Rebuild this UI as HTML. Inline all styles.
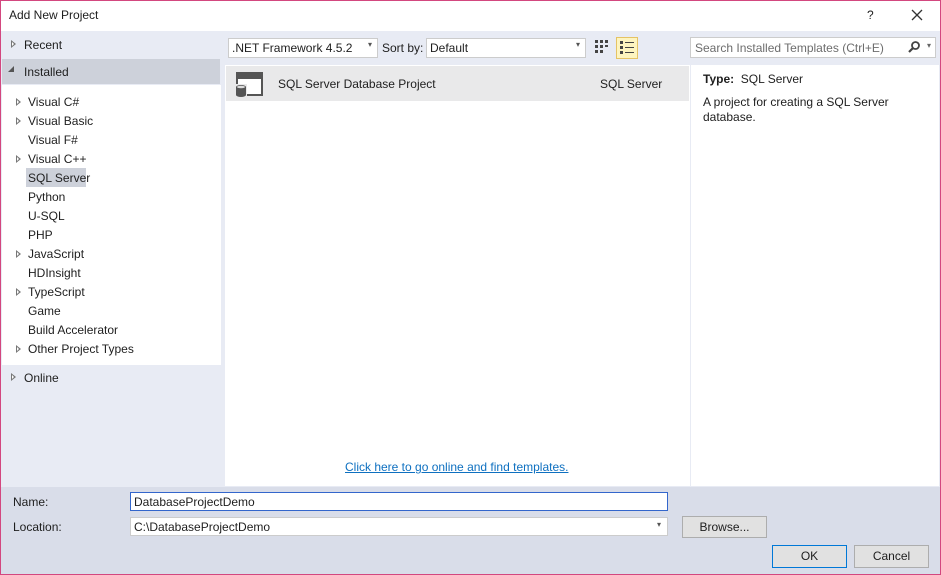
<!DOCTYPE html>
<html><head><style>
*{margin:0;padding:0;box-sizing:border-box}
body{width:941px;height:575px;overflow:hidden;font-family:"Liberation Sans",sans-serif;font-size:12px;color:#1e1e1e;background:#fff}
.a{position:absolute;white-space:nowrap}
#win{position:absolute;left:0;top:0;width:941px;height:575px;background:#e8ebf4}
#bd{position:absolute;left:0;top:0;width:941px;height:575px;border:1px solid #d3477f;z-index:10;pointer-events:none}
.tri{position:absolute;width:0;height:0;border-top:4px solid transparent;border-bottom:4px solid transparent;border-left:5px solid #777}
.tri:after{content:"";position:absolute;left:-4px;top:-2px;border-top:2px solid transparent;border-bottom:2px solid transparent;border-left:2px solid #fff}
.sel{background:#fff;border:1px solid #ccc;height:20px}
.btn{background:#e1e1e1;border:1px solid #adadad;text-align:center;line-height:20px}
</style></head><body>
<div id="win">
<div class="a" style="left:0;top:0;width:941px;height:31px;background:#fff"></div>
<div class="a" style="left:9px;top:8px;font-size:12px">Add New Project</div>
<div class="a" style="left:867px;top:8px;font-size:12px">?</div>
<svg class="a" style="left:911px;top:9px" width="12" height="12"><path d="M1 1L11 11M11 1L1 11" stroke="#333" stroke-width="1.3"/></svg>

<div class="tri" style="left:11px;top:40px"></div>
<div class="a" style="left:24px;top:38px">Recent</div>
<div class="a" style="left:2px;top:59px;width:218px;height:25px;background:#cdd1da"></div>
<div class="a" style="left:8px;top:66px;width:0;height:0;border-left:6px solid transparent;border-bottom:6px solid #555"></div>
<div class="a" style="left:24px;top:65px">Installed</div>
<div class="a" style="left:2px;top:85px;width:219px;height:280px;background:#fff"></div>
<div class="a" style="left:26px;top:168px;width:60px;height:19px;background:#cdd1da"></div>
<div class="tri" style="left:16px;top:98px"></div><div class="a" style="left:28px;top:95px">Visual C#</div>
<div class="tri" style="left:16px;top:117px"></div><div class="a" style="left:28px;top:114px">Visual Basic</div>
<div class="a" style="left:28px;top:133px">Visual F#</div>
<div class="tri" style="left:16px;top:155px"></div><div class="a" style="left:28px;top:152px">Visual C++</div>
<div class="a" style="left:28px;top:171px">SQL Server</div>
<div class="a" style="left:28px;top:190px">Python</div>
<div class="a" style="left:28px;top:209px">U-SQL</div>
<div class="a" style="left:28px;top:228px">PHP</div>
<div class="tri" style="left:16px;top:250px"></div><div class="a" style="left:28px;top:247px">JavaScript</div>
<div class="a" style="left:28px;top:266px">HDInsight</div>
<div class="tri" style="left:16px;top:288px"></div><div class="a" style="left:28px;top:285px">TypeScript</div>
<div class="a" style="left:28px;top:304px">Game</div>
<div class="a" style="left:28px;top:323px">Build Accelerator</div>
<div class="tri" style="left:16px;top:345px"></div><div class="a" style="left:28px;top:342px">Other Project Types</div>
<div class="tri" style="left:11px;top:373px"></div><div class="a" style="left:24px;top:371px">Online</div>

<div class="a sel" style="left:228px;top:38px;width:150px"></div>
<div class="a" style="left:232px;top:41px">.NET Framework 4.5.2</div>
<div class="a" style="left:368px;top:40px;font-size:8px;color:#555">▾</div>
<div class="a" style="left:382px;top:41px">Sort by:</div>
<div class="a sel" style="left:426px;top:38px;width:160px"></div>
<div class="a" style="left:430px;top:41px">Default</div>
<div class="a" style="left:576px;top:40px;font-size:8px;color:#555">▾</div>
<svg class="a" style="left:595px;top:40px" width="14" height="14"><g fill="#444"><rect x="0" y="0" width="3" height="3"/><rect x="5" y="0" width="3" height="3"/><rect x="10" y="0" width="3" height="3"/><rect x="0" y="5" width="3" height="3"/><rect x="5" y="5" width="3" height="3"/><rect x="10" y="5" width="3" height="2"/><rect x="0" y="10" width="3" height="3"/><rect x="5" y="10" width="3" height="3"/></g></svg>
<div class="a" style="left:616px;top:37px;width:22px;height:22px;background:#fdf4bf;border:1px solid #e5c365"></div>
<svg class="a" style="left:620px;top:41px" width="14" height="14"><g fill="#444"><rect x="0" y="0" width="3" height="3"/><rect x="0" y="5" width="3" height="3"/><rect x="0" y="10" width="3" height="3"/><rect x="5" y="1" width="9" height="1"/><rect x="5" y="6" width="9" height="1"/><rect x="5" y="11" width="9" height="1"/></g></svg>

<div class="a" style="left:225px;top:65px;width:465px;height:421px;background:#fff"></div>
<div class="a" style="left:226px;top:66px;width:463px;height:35px;background:#e9e9ea"></div>
<svg class="a" style="left:235px;top:72px" width="28" height="26"><rect x="2" y="1" width="25" height="22" fill="#fff" stroke="#555" stroke-width="2"/><rect x="2" y="1" width="25" height="6" fill="#555"/><rect x="0" y="12" width="12" height="14" fill="#e9e9ea"/><ellipse cx="6" cy="15" rx="5" ry="2" fill="#555"/><rect x="1" y="15" width="10" height="8" fill="#555"/><ellipse cx="6" cy="23" rx="5" ry="2" fill="#555"/><ellipse cx="6" cy="15" rx="4" ry="1.3" fill="#ddd"/></svg>
<div class="a" style="left:278px;top:77px">SQL Server Database Project</div>
<div class="a" style="left:600px;top:77px">SQL Server</div>
<div class="a" style="left:345px;top:460px;color:#0e70c0;text-decoration:underline">Click here to go online and find templates.</div>

<div class="a sel" style="left:690px;top:37px;width:246px;height:21px"></div>
<div class="a" style="left:695px;top:41px;color:#6d6d6d">Search Installed Templates (Ctrl+E)</div>
<svg class="a" style="left:908px;top:41px" width="12" height="12"><circle cx="7.5" cy="4.5" r="3.5" fill="none" stroke="#444" stroke-width="1.8"/><path d="M5 7L1 11" stroke="#444" stroke-width="2.2"/></svg>
<div class="a" style="left:927px;top:41px;font-size:8px;color:#666">▾</div>
<div class="a" style="left:691px;top:65px;width:248px;height:421px;background:#fff"></div>
<div class="a" style="left:703px;top:72px"><b>Type:</b>&nbsp; SQL Server</div>
<div class="a" style="left:703px;top:95px;line-height:15px">A project for creating a SQL Server<br>database.</div>

<div class="a" style="left:0;top:487px;width:941px;height:88px;background:#d9dde9"></div>
<div class="a" style="left:13px;top:495px">Name:</div>
<div class="a" style="left:130px;top:492px;width:538px;height:19px;background:#fff;border:1px solid #3366cc"></div>
<div class="a" style="left:134px;top:495px">DatabaseProjectDemo</div>
<div class="a" style="left:13px;top:520px">Location:</div>
<div class="a" style="left:130px;top:517px;width:538px;height:19px;background:#fff;border:1px solid #ccc"></div>
<div class="a" style="left:134px;top:520px">C:\DatabaseProjectDemo</div>
<div class="a" style="left:657px;top:520px;font-size:8px;color:#555">▾</div>
<div class="a btn" style="left:682px;top:516px;width:85px;height:22px">Browse...</div>
<div class="a btn" style="left:772px;top:545px;width:75px;height:23px;border-color:#0078d7">OK</div>
<div class="a btn" style="left:854px;top:545px;width:75px;height:23px">Cancel</div>
</div>
<div id="bd"></div>
</body></html>
